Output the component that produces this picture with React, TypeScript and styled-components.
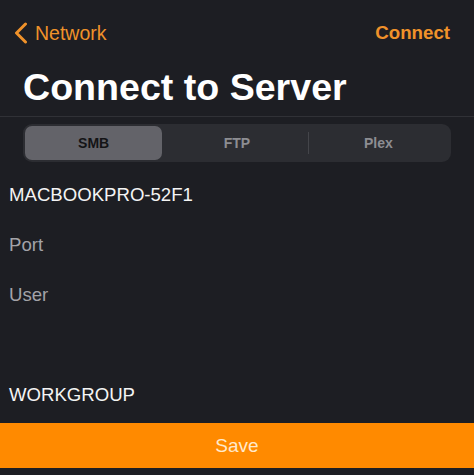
import React from "react";
import styled, { createGlobalStyle } from "styled-components";

const Global = createGlobalStyle`
  html, body { margin: 0; padding: 0; background: #1d1e23; }
  * { box-sizing: border-box; }
`;

const Page = styled.div`
  width: 474px;
  height: 475px;
  background: #1d1e23;
  font-family: "Liberation Sans", Arial, sans-serif;
  display: flex;
  flex-direction: column;
  overflow: hidden;
`;

const Header = styled.header`
  display: flex;
  flex-direction: column;
  padding-bottom: 6px;
  border-bottom: 1px solid #303136;
`;

const NavBar = styled.nav`
  height: 64px;
  display: flex;
  align-items: center;
  justify-content: space-between;
  padding: 2px 24px 0 14px;
`;

const BackButton = styled.button`
  display: flex;
  align-items: center;
  gap: 7px;
  background: none;
  border: none;
  padding: 0;
  color: #f0922a;
  font-family: inherit;
  font-size: 19.5px;
  cursor: pointer;
`;

const ActionButton = styled.button`
  background: none;
  border: none;
  padding: 0;
  color: #f0922a;
  font-family: inherit;
  font-size: 18.7px;
  font-weight: 700;
  cursor: pointer;
`;

const Title = styled.h1`
  margin: 0;
  padding-left: 23px;
  font-size: 37.6px;
  line-height: 46px;
  font-weight: 700;
  color: #ffffff;
`;

const Segmented = styled.div`
  margin: 7px 23px 0;
  height: 38px;
  background: #2c2d32;
  border-radius: 9px;
  padding: 2px;
  display: grid;
  grid-template-columns: repeat(3, 1fr);
  align-items: center;
`;

const Segment = styled.div<{ $active?: boolean; $divider?: boolean }>`
  height: 34px;
  display: flex;
  align-items: center;
  justify-content: center;
  border-radius: 7px;
  font-size: 14px;
  font-weight: 700;
  margin-right: ${(p) => (p.$active ? "4px" : "0")};
  background: ${(p) => (p.$active ? "#636369" : "transparent")};
  color: ${(p) => (p.$active ? "#141416" : "#8d8d92")};
  position: relative;
  ${(p) =>
    p.$divider
      ? `&::before { content: ""; position: absolute; left: 0; top: 6px; bottom: 6px; width: 1px; background: #44454a; }`
      : ""}
`;

const Form = styled.div`
  margin-top: 8px;
  display: flex;
  flex-direction: column;
`;

const Field = styled.div<{ $placeholder?: boolean }>`
  height: 50px;
  line-height: 50px;
  padding-left: 9px;
  font-size: 18.6px;
  color: ${(p) => (p.$placeholder ? "#a3a3a8" : "#f4f4f4")};
`;

const SaveButton = styled.button`
  margin-top: 3px;
  height: 45px;
  width: 100%;
  border: none;
  background: #ff8a00;
  color: #ffe9cc;
  font-family: inherit;
  font-size: 19px;
  cursor: pointer;
`;

const Chevron = () => (
  <svg width="14" height="22" viewBox="0 0 14 22" fill="none">
    <path
      d="M11.5 2 L2.5 11 L11.5 20"
      stroke="#f0922a"
      strokeWidth="3"
      strokeLinecap="round"
      strokeLinejoin="round"
    />
  </svg>
);

export default function App() {
  return (
    <Page>
      <Global />
      <Header>
        <NavBar>
          <BackButton>
            <Chevron />
            Network
          </BackButton>
          <ActionButton>Connect</ActionButton>
        </NavBar>
        <Title>Connect to Server</Title>
      </Header>
      <Segmented>
        <Segment $active>SMB</Segment>
        <Segment>FTP</Segment>
        <Segment $divider>Plex</Segment>
      </Segmented>
      <Form>
        <Field>MACBOOKPRO-52F1</Field>
        <Field $placeholder>Port</Field>
        <Field $placeholder>User</Field>
        <Field $placeholder></Field>
        <Field>WORKGROUP</Field>
      </Form>
      <SaveButton>Save</SaveButton>
    </Page>
  );
}
